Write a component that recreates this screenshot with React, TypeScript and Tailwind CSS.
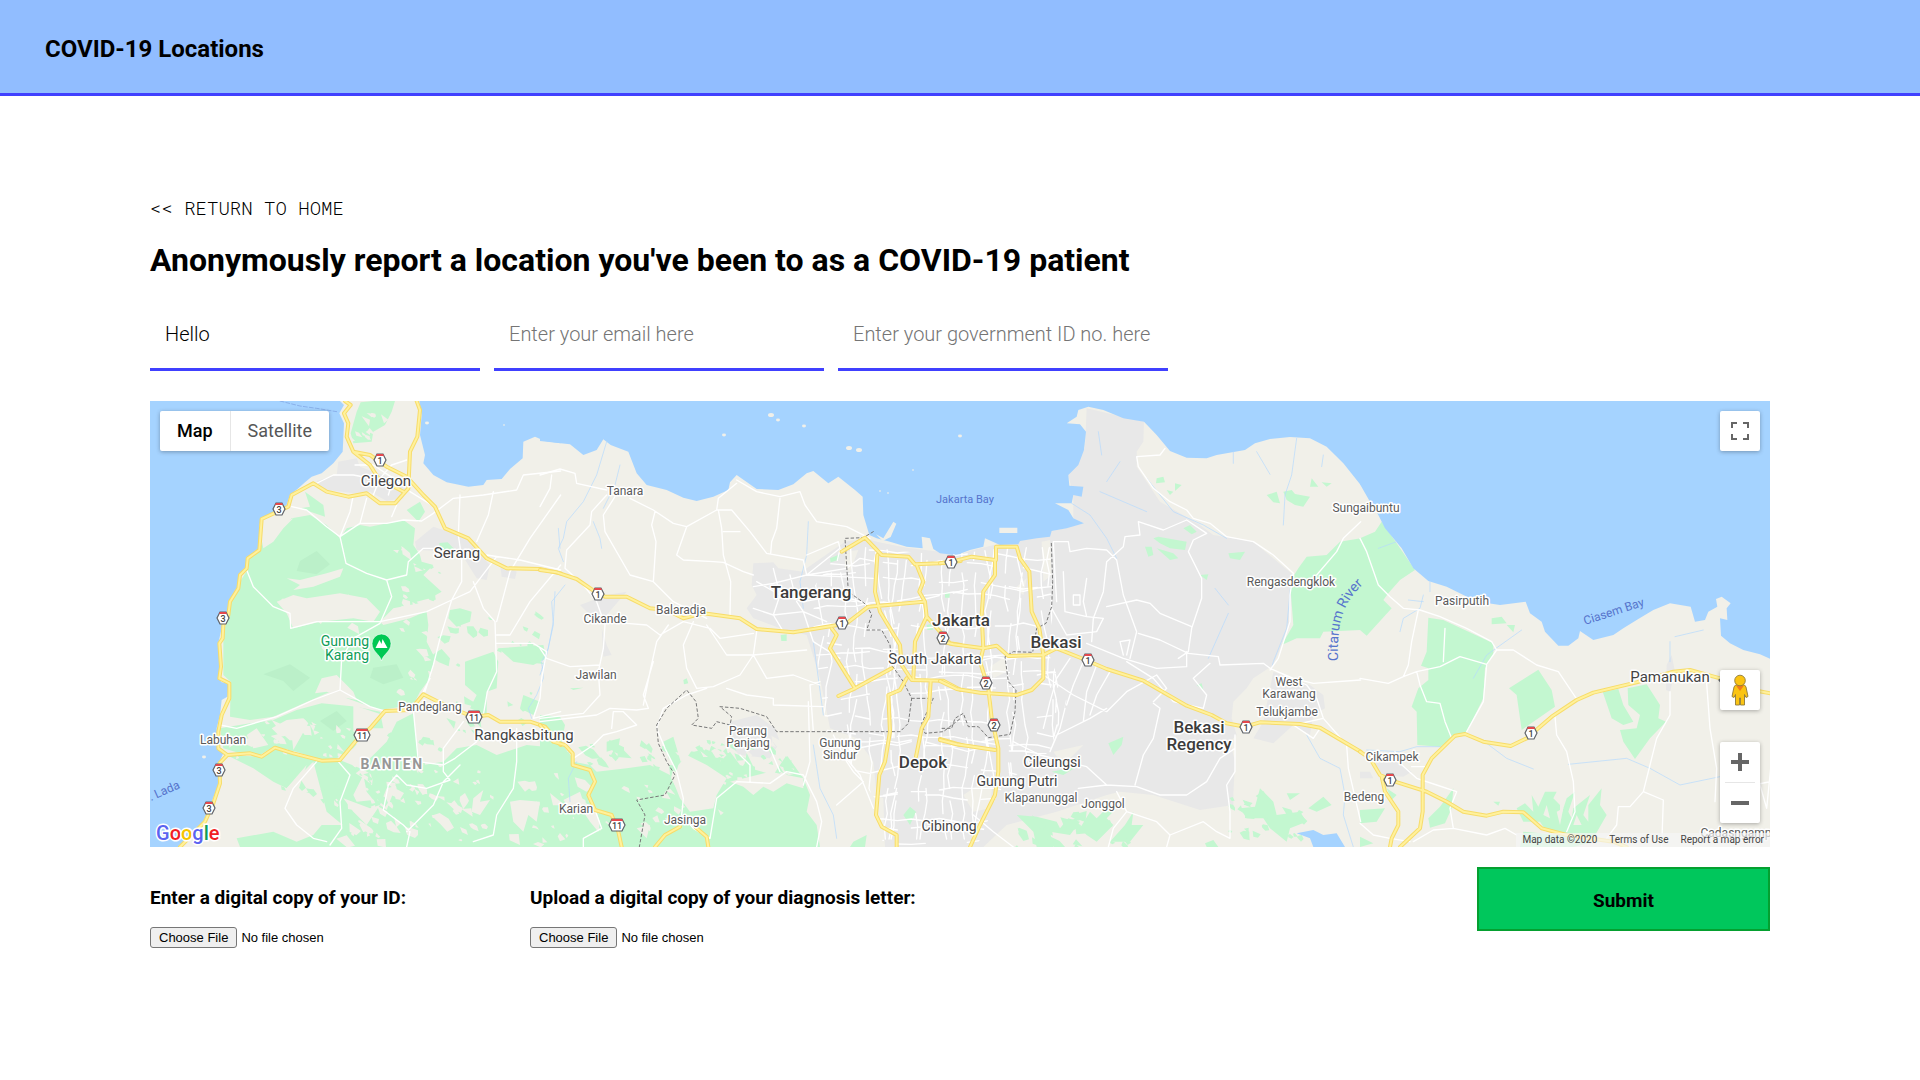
import { useState } from 'react'
import { clsx } from 'clsx'

type Tile = {
  x: number
  water: string[]
  urban: string[]
  parks: string[]
  clearings: string[]
  rivers: string[]
  streets: string[]
  highways: string[]
  borders: string[]
}

type Label = {
  text: string
  x: number
  y: number
  kind: 'city' | 'town' | 'suburb' | 'village'
}

// terrain is drawn at three units per pixel, in four tiles side by side
const tiles: Tile[] = [
  {
    x: -30,
    water: [
      'M30 18L600 18L612 30L598 55L612 85L610 130L608 170L580 205L545 235L515 245L495 262L475 280L450 300L440 330L420 350L362 372L357 400L358 460L345 470L320 490L318 520L297 540L295 575L275 605L262 660L245 700L236 740L240 800L235 850L245 862L265 865L262 905L245 915L240 960L230 1000L232 1060L250 1075L238 1100L235 1170L215 1220L190 1280L120 1356L30 1356Z',
      'M838 18L1262 18L1262 145L1215 138L1185 125L1150 140L1148 190L1110 222L1085 252L1040 255L1030 270L985 275L920 262L880 240L850 205L855 180L840 120L845 60Z',
    ],
    urban: [
      'M595 200L650 190L660 215L700 230L800 262L790 310L740 318L690 290L640 295L540 282L530 258L590 240Z',
      'M825 440L880 395L910 405L1000 440L1030 490L1050 510L1040 555L1010 550L960 470L830 465Z',
      'M1080 505L1130 530L1125 552L1085 545Z',
    ],
    parks: [
      'M650 50L662 22L700 18L765 18L755 50L735 90L700 110L695 140L640 145L632 115Z',
      'M918 42L955 40L978 60L970 85L945 95L922 75Z',
      'M455 370L510 360L560 390L600 430L620 400L660 390L690 395L790 375L825 400L820 450L840 480L845 500L880 510L850 540L905 590L870 610L830 620L860 650L865 690L860 740L885 790L870 850L840 890L820 930L720 945L620 910L590 885L560 895L480 930L400 965L330 975L270 965L272 860L250 840L250 720L265 650L280 600L300 560L325 520L325 490L365 450L370 420L420 400Z',
      'M800 345L840 320L855 350L835 380Z',
      'M495 290L550 330L555 365L480 340L510 335Z',
      'M240 1000L330 985L400 975L470 945L545 925L650 935L720 950L730 1000L690 1000L640 1060L590 1090L540 1095L470 1070L400 1055L360 1080L300 1075L250 1060Z',
      'M260 1080L360 1085L405 1060L460 1080L545 1100L600 1095L660 1120L740 1040L770 980L820 955L835 1080L850 1110L820 1160L740 1180L700 1280L620 1300L560 1250L520 1100L440 1180L400 1160L340 1120Z',
      'M930 645L960 640L995 650L990 680L950 695L925 670Z',
      'M975 800L1060 770L1075 800L1070 880L1040 890L1040 960L990 940L1010 900L975 870Z',
      'M1075 760L1210 750L1220 790L1180 810L1120 800Z',
      'M1150 900L1200 920L1180 960L1140 940Z',
      'M780 1140L850 1110L910 1100L950 1060L1010 1050L1070 1080L1160 1050L1262 1060L1262 1356L300 1356L290 1330L400 1310L470 1340L520 1320L545 1290L610 1290L680 1200L740 1245Z',
    ],
    clearings: [
      'M410 620L460 600L500 610L600 595L680 610L720 650L700 680L640 670L540 680L460 700L440 655Z',
      'M440 550L480 555L560 535L610 520L600 545L520 575L460 585L480 570Z',
      'M360 410L460 370L430 400L400 440L370 460Z',
      'M545 850L590 840L640 890L650 915L600 905L560 890L525 895Z',
      'M720 680L760 640L860 620L880 640L810 670L730 690Z',
      'M395 1000L440 975L490 970L505 985L480 1030L460 1065L455 1020L420 1025Z',
      'M320 1020L350 1000L385 1050L340 1060Z',
      'M640 930L700 950L730 960L690 1000L640 1010Z',
      'M640 1200L670 1140L680 1190L700 1215L650 1220Z',
      'M610 1210L690 1240L720 1230L680 1290L640 1250Z',
      'M440 1180L500 1110L470 1200L520 1220L560 1270L500 1270L520 1310L450 1260Z',
      'M1000 1210L1030 1185L1020 1220L1050 1215L1020 1260L995 1250Z',
      'M1110 1220L1140 1215L1200 1220L1190 1280L1165 1260L1150 1310L1120 1280Z',
    ],
    rivers: ['M1245 590L1240 680L1225 760L1205 800L1210 850L1190 900L1165 940L1175 970', 'M1255 400L1260 460'],
    streets: [
      'M520 270L580 240L640 240L720 255L800 265', 'M640 300L630 350L600 425L560 395L500 345L455 335',
      'M600 425L618 505L680 535L740 555L755 605L720 685L640 730L605 790L600 885L520 915L410 965L290 1000L240 990',
      'M600 425L660 385L740 385L790 375L845 378L880 355L940 310L1030 300L1130 285L1150 240L1262 228',
      'M320 525L340 575L400 635L450 655L452 700L530 680L720 680L860 650L935 615L990 590L1070 485',
      'M870 850L850 890', 'M740 555L800 540L805 500L850 460L910 460', 'M935 615L900 730L880 810L855 890', 'M1000 560L1030 640L1065 680L1070 830L1042 890L1030 960',
      'M960 300L955 420L965 490L965 560L935 615', 'M1060 290L1045 360L1010 440', 'M1262 300L1170 430L1110 530L1070 680', 'M600 885L690 935L740 950L820 945L835 1100L910 1110L945 1090L1010 1040',
      'M970 980L910 1060L910 1130L930 1155L860 1180L800 1170L770 1140L745 1170L730 1245L790 1290L810 1310L800 1356', 'M800 1310L880 1230L910 1160L960 1110',
      'M530 1100L460 1180L435 1240L470 1290L520 1330L560 1340', 'M595 1100L630 1140L600 1220L605 1300L570 1350', 'M1130 1000L1130 1100L1120 1180L1070 1260L1060 1320L1000 1340', 'M1262 510L1170 620L1110 720L1070 720',
      'M1070 745L1180 745L1220 770L1205 850L1200 910L1180 970L1262 950', 'M645 210L700 210L760 250L745 300', 'M800 195L755 210L720 250L700 300', 'M680 310L660 385', 'M770 330L755 365', 'M810 290L875 330', 'M1040 480L1140 495L1262 525',
    ],
    highways: [
      'M615 18L632 30L612 55L625 85L620 125L640 170L690 180L740 215L800 245L850 300L885 335L915 400L985 430L1040 490L1100 520L1200 522L1262 535',
      'M830 18L840 45L832 125L810 170L805 280L765 325L720 325L680 295L625 305L560 290L520 265L455 300L445 335L365 372L358 465L323 490L320 520L300 540L295 580L270 620L265 660L250 690L248 730L238 745L243 815L238 850L268 865L268 910L245 960L235 1010L235 1060L262 1080L238 1105L240 1165L220 1225L195 1280L120 1356',
      'M640 170L690 210L715 250L790 290', 'M262 1080L330 1075L365 1085L405 1058L460 1075L545 1097L600 1095L650 1035L690 1000L735 948L810 945L850 898L890 918L950 945L1000 966L1045 960L1080 980L1170 980L1215 995L1262 1050',
    ],
    borders: [],
  },
  {
    x: 1170,
    water: [
      'M0 18L1262 18L1262 482L1200 475L1180 462L1170 430L1145 425L1148 460L1100 455L1050 440L1010 430L988 420L970 360L968 305L945 285L895 245L865 265L820 228L800 235L760 268L715 285L650 282L590 240L570 262L565 285L520 305L470 318L430 308L380 285L320 270L290 235L265 170L212 150L190 133L170 165L130 180L90 148L0 138Z',
    ],
    urban: [
      'M640 505L700 502L715 520L790 530L800 520L915 440L975 430L1010 440L1100 458L1262 478L1262 1356L1035 1356L1030 1210L1010 1200L1000 1100L950 1030L870 1000L840 850L800 720L720 700L640 670L620 640L650 600L635 570Z',
      'M570 980L650 960L705 1000L720 1040L690 1090L600 1080L565 1050Z', 'M120 630L200 600L260 590L200 660L180 690Z', 'M185 700L200 750L215 780L190 785Z',
    ],
    parks: [
      'M0 960L60 965L75 990L65 1040L100 1100L150 1110L170 1130L260 1120L330 1110L390 1140L385 1080L370 1040L400 1025L425 1110L460 1060L500 1040L545 1060L540 1100L570 1070L600 1110L630 1120L700 1140L740 1080L790 1150L810 1200L800 1250L830 1290L840 1356L0 1356Z',
      'M430 855L440 850L445 865L432 868Z', 'M722 720L740 718L740 738L724 738Z', 'M870 490L900 478L895 495L872 502Z', 'M1160 690L1180 685L1178 705L1162 705Z', 'M1215 592L1227 592L1227 608L1215 608Z',
      'M1090 1260L1110 1235L1128 1250L1110 1290Z', 'M940 1340L980 1320L975 1356L930 1356Z', 'M90 880L130 878L100 885Z', 'M200 1040L240 1030L235 1060L200 1070Z',
    ],
    clearings: [
      'M70 1215L120 1190L130 1220L165 1240L180 1280L175 1310L150 1280L130 1250L90 1240Z',
      'M415 1110L440 1080L500 1110L560 1150L530 1200L520 1240L450 1250L420 1210L400 1160Z',
      'M570 1160L690 1130L790 1150L790 1180L740 1165L700 1190L670 1175L640 1200L610 1175Z',
      'M290 1300L330 1290L320 1330Z', 'M915 470L955 465L930 530L915 520Z',
    ],
    rivers: ['M200 140L170 240L130 320L80 380L70 430L55 460L70 500', 'M240 210L225 270L190 340', 'M160 380L180 430L185 460', 'M75 570L35 620L40 690L20 780L0 840', 'M805 380L800 480L780 560L790 640', 'M820 740L850 960', 'M820 1050L840 1180L880 1260L890 1330', 'M110 1100L85 1150L90 1220'],
    streets: [
      'M0 240L60 222L105 235L110 265L200 285', 'M35 240L30 280L0 335', 'M200 300L155 350L150 390L80 465L75 520L130 570L170 620L195 690L190 760L175 830L180 900L130 955L0 970',
      'M225 305L190 360L195 410L270 540L340 560L400 620L500 670', 'M270 310L340 345L400 385L440 395L530 345L535 310L590 265', 'M345 350L335 390L348 440L340 560',
      'M440 395L410 480L430 495L520 500L550 502L610 530L640 540', 'M535 345L545 400L550 480L572 560L570 660', 'M530 345L575 345L630 410L680 475L790 495L800 540', 'M590 255L650 290L720 305L780 290L795 330L830 380L920 395L990 430',
      'M720 310L710 400L695 440L692 475', 'M550 410L600 410', 'M800 480L895 440L900 460L800 540', 'M260 685L320 690L360 720L430 680L510 700L540 730L640 715', 'M385 690L350 740L330 830L310 930',
      'M460 680L430 750L440 820L470 880L520 875L600 840L640 780L650 710', 'M500 690L560 780L640 780L800 765', 'M560 880L620 900L700 910L700 930L850 935', 'M640 780L680 850L760 840L840 870',
      'M0 760L20 790L90 815L180 810', 'M0 980L170 960L210 940L290 945L325 940L310 900L340 800', 'M100 1090L160 1050L190 1020L230 1010L290 990L250 950L220 950L215 1000', 'M440 900L370 940L350 1000L375 1060L410 1130L430 1210L425 1260L460 1300L510 1330L530 1210L590 1160L690 1165L740 1130L790 1140L830 1220L845 1280L830 1356',
      'M600 1080L630 1110L630 1160', 'M690 1060L720 1130', 'M805 920L810 1100L790 1170', 'M840 860L810 870L820 1010', 'M910 1080L960 1140L1000 1240', 'M880 1020L920 1100L940 1130L970 1160L890 1230', 'M440 900L500 880', 'M165 1245L185 1300L130 1330L130 1356',
      'M650 560L720 600L790 620L900 600L990 630', 'M700 520L720 600L700 660L730 710', 'M640 640L700 660L790 650L860 680', 'M750 540L770 620L790 650L820 740L900 790', 'M640 575L700 565L800 540L900 545L1000 550', 'M1010 500L960 490L920 520L800 540',
    ],
    highways: [
      'M0 525L50 532L110 552L165 590L195 605L260 605L330 640L380 645L430 670L490 655L600 670L650 702L760 712L880 692L920 685L985 635L1150 620',
      'M905 470L975 428L1025 480L1105 485L1125 508L1200 505L1262 498', 'M1012 480L1005 590L1020 650L1080 750L1085 810L1115 855L1210 857L1262 885',
      'M1130 510L1150 560L1138 590L1155 620L1160 665L1200 710L1230 745L1262 750', 'M1160 665L1125 740L1120 850', 'M875 700L890 720L870 760L945 880L895 903', 'M945 880L1055 820', 'M1100 850L1080 885L1045 900L1050 1010L1035 1100L1018 1140L1008 1260L1025 1295L1070 1320L1070 1356',
      'M1172 860L1165 965L1145 1000L1128 1085', 'M1200 1032L1262 1050', 'M0 990L40 1040L75 1050L98 1075L98 1110L150 1125L165 1160L145 1200L165 1245L215 1260L235 1310L245 1356', 'M345 1356L375 1320L420 1295', 'M465 1295L500 1325L505 1356',
    ],
    borders: [
      'M1000 410L970 428L915 430L918 480L925 590L980 630L995 660L980 705L1025 705L1050 750L1055 810L1090 860L1115 910L1105 985L1080 1010L710 1010L680 965L600 940L540 935L575 965L570 990L530 980L515 1000L455 990L475 970L468 920L440 885L380 940L350 990L355 1045L380 1100L405 1140L375 1200L290 1215L315 1260L298 1356',
      'M1115 910L1180 910L1145 985L1155 1015L1210 1010L1262 970',
    ],
  },
  {
    x: 2370,
    water: [
      'M0 18L1262 18L1262 270L1210 205L1160 155L1110 130L1050 126L990 132L945 145L915 165L830 180L800 190L740 188L690 168L650 120L612 80L550 70L490 45L445 35L415 45L410 65L380 85L420 88L438 110L432 165L415 210L385 240L388 272L430 275L425 305L400 300L395 325L345 325L385 345L400 370L432 385L380 400L335 408L330 425L290 430L240 438L235 448L180 450L135 430L130 455L90 465L50 480L0 470Z',
      'M1070 1315L1120 1305L1150 1320L1190 1315L1215 1356L1120 1356L1110 1330Z',
    ],
    urban: [
      'M0 475L50 482L90 467L340 408L432 385L400 370L400 300L385 240L435 160L440 40L612 80L610 140L590 170L590 215L660 320L780 390L820 420L940 440L1060 540L1050 690L1000 810L940 850L920 880L880 920L875 970L890 1020L870 1040L885 1100L880 1200L880 1230L780 1245L640 1200L540 1190L500 1200L350 1250L200 1290L130 1356L0 1356Z',
      'M1000 830L1110 870L1150 900L1155 940L1120 960L1110 1020L1060 990L1000 1045L940 1030L970 980Z',
    ],
    parks: [
      'M1100 485L1160 480L1200 440L1262 430L1262 705L1150 710L1140 730L1070 730L1025 750L1060 690L1050 560L1075 520Z',
      'M650 250L670 245L675 262L648 265Z', 'M705 265L725 270L705 288Z', 'M680 285L700 290L690 300Z', 'M980 300L1010 290L1020 325L1000 322Z', 'M1030 290L1055 285L1065 297L1110 305L1090 335L1065 330L1040 315Z', 'M1115 250L1135 275L1110 275Z', 'M1145 262L1175 265L1160 275Z',
      'M730 400L750 390L770 410L755 418Z', 'M615 455L635 455L640 480L625 485Z', 'M640 430L655 425L740 440L735 465L690 460L660 445Z', 'M650 460L700 475L715 490L690 495Z', 'M865 475L915 470L900 495L870 490Z', 'M780 540L805 538L800 555Z',
      'M170 820L190 795L190 820Z', 'M505 1045L550 1025L545 1050L520 1080Z', 'M15 592L30 592L28 608L15 608Z', 'M335 1130L410 1115L370 1140Z', 'M110 1210L145 1190L145 1215L120 1228Z', 'M770 870L785 865L790 885Z',
      'M230 1260L290 1265L350 1280L360 1300L385 1270L420 1280L390 1320L330 1310L340 1356L290 1356L280 1310Z', 'M420 1300L450 1250L470 1270L500 1240L530 1240L500 1270L520 1290L470 1340L440 1320Z', 'M510 1340L555 1290L580 1250L575 1290L610 1290L570 1340Z',
      'M900 1240L945 1235L960 1180L1000 1220L1010 1260L1080 1250L1100 1280L1050 1300L1040 1340L990 1300L970 1270L920 1270Z', 'M1040 1195L1080 1195L1050 1215Z', 'M1105 1240L1150 1205L1175 1230L1130 1250Z', 'M795 1345L820 1335L835 1356L800 1356Z',
    ],
    clearings: ['M178 398L232 398L232 414L178 414Z', 'M305 440L330 435L335 540L310 560Z', 'M225 580L260 550L250 600Z', 'M150 815L195 785L200 830L160 850Z', 'M340 1070L430 1050L370 1110Z', 'M70 1200L160 1140L150 1240L100 1250Z'],
    rivers: ['M395 325L450 360L500 430L530 490', 'M475 110L485 180', 'M1070 130L1055 240L1035 300L1030 390', 'M950 170L990 238', 'M880 170L880 205', 'M620 250L700 350L790 390L860 430', 'M1055 540L1040 700L1000 800L995 820', 'M1100 1020L1140 1090L1200 1120L1215 1200L1210 1260L1240 1356', 'M865 655L805 790', 'M825 580L865 630', 'M480 290L620 350', 'M540 200L500 260', 'M1150 180L1145 215'],
    streets: [
      'M675 160L660 180L590 185L595 215L640 280L690 320L740 345L760 370L810 385L860 425L940 440L1000 480L1060 535L1050 600L1050 680L1015 790L990 825', 'M595 380L600 420L555 425L550 455L500 500L490 590L460 670L455 740', 'M595 380L670 405L740 375L800 415L760 435L745 470L785 550L785 610L755 700L745 770L715 790',
      'M500 465L440 460L390 470L385 440L340 440', 'M500 465L530 495L550 600L590 710L570 790', 'M500 635L590 615L630 625L660 655L755 695', 'M595 715L660 735L745 775L835 785L840 810L970 805L990 820L1100 870L1130 910L1150 970L1220 1050L1225 1120L1262 1280',
      'M990 820L1060 850L1120 865L1262 855', 'M370 530L375 650L440 665L490 670', 'M335 640L380 720L470 710L490 670', 'M440 745L550 790L650 820L740 815L740 770', 'M560 800L640 850L700 920L790 940L800 900L760 850L810 805', 'M640 920L680 880L650 840', 'M640 925L660 940L640 1030L610 1080L585 1170', 'M310 840L400 900L500 950L560 890L650 840',
      'M440 1115L500 1170L590 1175L660 1200L740 1200L800 1160L840 1090L885 1060L885 1020', 'M885 1060L885 1130L860 1170L870 1250L870 1330L830 1310L790 1280L690 1320L650 1280L560 1250L530 1190', 'M415 1180L500 1170', 'M560 1250L520 1300L505 1356',
      'M220 1040L300 1080L440 1115', 'M330 1070L350 1020L450 970L500 940', 'M375 940L360 1000L330 1070', 'M100 1260L160 1310L220 1356', 'M1130 540L1190 470L1210 430L1262 380', 'M1150 970L1060 990L1120 1030L1140 1000',
      'M400 600L420 600L420 630L400 630Z', 'M690 1320L680 1356', 'M550 780L540 740L570 735L560 780', 'M430 800L400 870L380 930', 'M470 810L440 890L430 980', 'M510 830L470 900L450 960', 'M390 790L350 850L330 920L310 1000', 'M340 440L345 540L350 620', 'M440 550L430 620L440 665',
    ],
    highways: [
      'M0 505L35 500L95 485L165 495L165 540L130 590L125 660L130 760L120 800L145 880L155 970L175 1060L175 1130L165 1200L120 1290L90 1356', 'M168 495L168 455L230 455L240 490L268 530L275 650L298 700L310 780L310 850L275 885L230 900L180 897L120 893L50 882L0 858',
      'M0 738L40 748L130 760L170 752L205 783L310 780L350 760L430 792L500 822L610 857L740 932L815 960L860 985L915 995L960 982L1080 987L1140 998L1262 1070', 'M0 1035L50 1048L165 1065',
    ],
    borders: ['M334 445L338 560L335 635L318 685L290 700L278 772L220 770L195 785L205 860L228 885L225 950L210 1018L145 1028L115 995L85 995L70 955L45 970L35 1000L0 1000'],
  },
  {
    x: 3630,
    water: ['M0 18L1232 18L1232 792L1200 778L1150 765L1110 745L1083 722L1080 670L1102 675L1100 640L1112 625L1085 605L1068 612L1072 635L1045 650L1035 675L1005 680L992 635L930 625L880 645L830 675L790 700L760 720L700 735L660 708L655 730L625 752L595 752L555 710L545 680L510 655L497 620L420 630L385 625L330 610L260 575L205 558L160 520L125 460L75 400L55 360L30 320L0 268Z'],
    urban: ['M45 1105L110 1100L155 1130L130 1145L60 1140Z', 'M920 810L935 780L945 830L930 890L918 885Z', 'M0 1130L30 1130L40 1150L0 1150Z'],
    parks: [
      'M0 430L45 410L65 380L110 445L165 525L120 555L85 595L70 615L95 640L20 722L0 705Z',
      'M205 668L250 675L400 745L400 780L375 820L370 910L320 1010L240 1055L172 1050L170 950L155 935L175 880L205 855L205 820L183 812L200 770Z',
      'M535 824L575 885L585 935L485 1005L470 900L447 880Z', 'M728 890L775 882L790 930L820 980L790 990L755 970Z', 'M803 880L860 868L900 930L895 970L918 980L870 1030L825 1092L790 1040L780 1005L830 1000L840 960L805 930Z',
      'M0 1245L75 1240L50 1280L0 1285Z', 'M205 1270L240 1235L280 1180L275 1240L255 1285L210 1298Z', 'M80 1180L110 1200L95 1215Z', 'M400 1220L420 1220L415 1232Z', 'M395 670L425 665L440 685L395 688Z', 'M440 690L465 690L460 712Z', 'M0 1325L40 1345L0 1356Z',
      'M470 1240L495 1225L520 1250L515 1200L535 1235L555 1190L590 1190L580 1210L600 1230L600 1270L620 1210L645 1190L625 1250L635 1270L640 1240L690 1200L670 1260L685 1280L685 1230L725 1180L720 1230L740 1260L700 1330L630 1320L560 1310L540 1280L490 1280Z', 'M490 1310L600 1320L700 1340L640 1356L480 1356Z',
    ],
    clearings: ['M590 1250L610 1240L600 1290Z', 'M650 1260L665 1290L640 1290Z', 'M560 1230L570 1270L550 1260Z'],
    rivers: ['M55 460L110 440', 'M210 560L210 590', 'M145 615L190 620', 'M190 600L180 640L130 670L120 710', 'M340 850L380 780L485 705', 'M625 1108L800 1090L870 1120L960 1170L1080 1145', 'M930 740L930 800', 'M945 725L1030 705', 'M380 1045L440 1090L520 1122', 'M20 1065L120 1070L170 1055L250 1055'],
    streets: [
      'M0 430L20 470L55 570L90 605L130 640L180 645L240 665L320 700L395 740L410 765L460 765L530 810L595 830L650 912', 'M175 645L155 740L145 810L130 845L85 865L0 850', 'M130 845L170 830L240 815L300 785L380 808L410 765',
      'M380 808L370 920L320 1010', 'M170 830L180 870L200 920L240 925L255 980L275 1030', 'M255 700L250 800', 'M585 965L590 1020L620 1070L640 1160L645 1250L620 1310', 'M930 890L930 960L890 1030L870 1110L850 1190L910 1215L905 1356', 'M850 1190L810 1235L775 1235L770 1290L740 1330',
      'M1040 865L1050 1000L1070 1120L1065 1220', 'M120 1105L170 1150L230 1170L290 1190L270 1240L280 1300L380 1320L435 1300L470 1320', 'M155 1115L200 1115', 'M120 1105L105 1070', 'M280 1300L220 1305L160 1340', 'M0 1285L40 1320L90 1330L150 1340', 'M1200 1170L1220 1240L1232 1120', 'M1180 1170L1232 1160',
    ],
    highways: [
      'M0 1070L30 1090L60 1140L105 1160L200 1190L260 1220L310 1250L380 1262L430 1250L490 1252L545 1300L620 1320L760 1340L800 1356', 'M65 1145L75 1190L115 1250L115 1290L95 1330L90 1356', 'M120 1356L180 1300L188 1250L188 1140L215 1090L285 1022L315 1017L370 1040L452 1053L500 1030L575 965L650 915L700 893L830 862L940 830L990 825L1080 850L1150 880L1232 895',
    ],
    borders: [],
  },
]

const labels: Label[] = [
  { text: 'Tangerang', x: 661, y: 197, kind: 'city' },
  { text: 'Jakarta', x: 811, y: 225, kind: 'city' },
  { text: 'Bekasi', x: 906, y: 247, kind: 'city' },
  { text: 'Depok', x: 773, y: 367, kind: 'city' },
  { text: 'Bekasi', x: 1049, y: 332, kind: 'city' },
  { text: 'Regency', x: 1049, y: 349, kind: 'city' },
  { text: 'Cilegon', x: 236, y: 85, kind: 'town' },
  { text: 'Serang', x: 307, y: 157, kind: 'town' },
  { text: 'Rangkasbitung', x: 374, y: 339, kind: 'town' },
  { text: 'South Jakarta', x: 785, y: 263, kind: 'town' },
  { text: 'Cibinong', x: 799, y: 430, kind: 'suburb' },
  { text: 'Cileungsi', x: 902, y: 366, kind: 'suburb' },
  { text: 'Gunung Putri', x: 867, y: 385, kind: 'suburb' },
  { text: 'Pamanukan', x: 1520, y: 281, kind: 'town' },
  { text: 'Pandeglang', x: 280, y: 310, kind: 'village' },
  { text: 'Labuhan', x: 73, y: 343, kind: 'village' },
  { text: 'Tanara', x: 475, y: 94, kind: 'village' },
  { text: 'Cikande', x: 455, y: 222, kind: 'village' },
  { text: 'Balaradja', x: 531, y: 213, kind: 'village' },
  { text: 'Jawilan', x: 446, y: 278, kind: 'village' },
  { text: 'Parung', x: 598, y: 334, kind: 'village' },
  { text: 'Panjang', x: 598, y: 346, kind: 'village' },
  { text: 'Gunung', x: 690, y: 346, kind: 'village' },
  { text: 'Sindur', x: 690, y: 358, kind: 'village' },
  { text: 'Karian', x: 426, y: 412, kind: 'village' },
  { text: 'Jasinga', x: 535, y: 423, kind: 'village' },
  { text: 'Klapanunggal', x: 891, y: 401, kind: 'village' },
  { text: 'Jonggol', x: 953, y: 407, kind: 'village' },
  { text: 'Rengasdengklok', x: 1141, y: 185, kind: 'village' },
  { text: 'West', x: 1139, y: 285, kind: 'village' },
  { text: 'Karawang', x: 1139, y: 297, kind: 'village' },
  { text: 'Telukjambe', x: 1137, y: 315, kind: 'village' },
  { text: 'Sungaibuntu', x: 1216, y: 111, kind: 'village' },
  { text: 'Pasirputih', x: 1312, y: 204, kind: 'village' },
  { text: 'Cikampek', x: 1242, y: 360, kind: 'village' },
  { text: 'Bedeng', x: 1214, y: 400, kind: 'village' },
  { text: 'Cadasngamp', x: 1586, y: 436, kind: 'village' },
]

const shields: [number, number, string][] = [
  [230, 59, '1'], [129, 108, '3'], [73, 217, '3'], [212, 334, '11'], [324, 316, '11'],
  [69, 369, '3'], [59, 407, '3'], [448, 193, '1'], [801, 161, '1'], [692, 222, '1'],
  [793, 237, '2'], [467, 424, '11'], [938, 259, '1'], [836, 282, '2'], [844, 324, '2'],
  [1096, 326, '1'], [1381, 332, '1'], [1240, 379, '1'],
]

// small islands off the coast
const islands: [number, number, number][] = [
  [277, 22, 2], [354, 24, 1], [54, 356, 2], [574, 34, 2], [621, 14, 3], [628, 19, 2], [654, 25, 2], [699, 47, 3],
  [709, 49, 3], [763, 69, 1], [730, 90, 1], [738, 92, 1], [810, 35, 2],
]

function random(seed: number) {
  let s = seed
  return () => {
    s = (s * 16807) % 2147483647
    return s / 2147483647
  }
}

// city blocks: a loose grid that bends and breaks
function cityStreets() {
  const next = random(19)
  const paths: string[] = []
  for (let x = 2010; x < 2840; x += 33) {
    let d = ''
    let px = x
    for (let y = 440; y < 1350; y += 38) {
      px += (next() - 0.5) * 20
      d += `${d === '' || next() < 0.2 ? 'M' : 'L'}${Math.round(px)} ${y}`
    }
    paths.push(d)
  }
  for (let y = 450; y < 1350; y += 44) {
    let d = ''
    let py = y
    for (let x = 1990; x < 2860; x += 42) {
      py += (next() - 0.5) * 22
      d += `${d === '' || next() < 0.3 ? 'M' : 'L'}${x} ${Math.round(py)}`
    }
    paths.push(d)
  }
  return paths.join('')
}

// ragged slivers along the edge of the forests
function patches(seed: number, count: number, x: number, y: number, w: number, h: number) {
  const next = random(seed)
  let d = ''
  for (let i = 0; i < count; i++) {
    const cx = x + next() * w
    const cy = y + next() * h
    const size = 6 + next() * next() * 26
    const turn = next() * 6.3
    const corners = 3 + Math.floor(next() * 4)
    for (let k = 0; k < corners; k++) {
      const a = turn + (k / corners) * 6.3
      const r = size * (0.35 + next() * 0.9)
      const px = Math.round(cx + Math.cos(a) * r + Math.sin(a) * r * 0.5)
      const py = Math.round(cy + Math.sin(a) * r)
      d += `${k === 0 ? 'M' : 'L'}${px} ${py}`
    }
    d += 'Z'
  }
  return d
}

const cityPath = cityStreets()
const bare = [
  patches(5, 40, 240, 960, 420, 110),
  patches(11, 50, 560, 1090, 320, 240),
  patches(13, 34, 880, 1100, 420, 230),
  patches(17, 26, 1300, 1100, 420, 220),
  patches(19, 40, 1560, 1020, 460, 130),
  patches(23, 26, 740, 440, 110, 480),
  patches(31, 9, 400, 580, 260, 200),
  patches(37, 14, 600, 20, 120, 110),
].join('')
const wooded = [
  patches(41, 30, 870, 640, 300, 330),
  patches(43, 40, 400, 1090, 300, 110),
  patches(45, 44, 660, 960, 330, 200),
  patches(47, 46, 1500, 1020, 440, 120),
  patches(49, 14, 1240, 1030, 260, 80),
  patches(53, 24, 2600, 1240, 340, 100),
  patches(59, 22, 3240, 1190, 240, 130),
  patches(61, 14, 760, 430, 140, 160),
].join('')

function Shield({ x, y, text }: { x: number; y: number; text: string }) {
  const w = text.length > 1 ? 8 : 6
  return (
    <g transform={`translate(${x} ${y})`}>
      <path
        d={`M${-w + 3} -6H${w - 3}L${w} 0L${w - 3} 6H${-w + 3}L${-w} 0Z`}
        fill="#fff"
        stroke="#5f6368"
        strokeWidth="1.2"
      />
      <path d={`M${-w + 3} -6H${w - 3}L${w - 2} -4H${-w + 2}Z`} fill="#e5484d" />
      <text y="4" textAnchor="middle" className="fill-[#444444] text-[9px] font-medium">
        {text}
      </text>
    </g>
  )
}

function Terrain() {
  return (
    <svg
      viewBox="0 0 1620 446"
      preserveAspectRatio="xMidYMid slice"
      className="w-full h-full"
      role="img"
      aria-label="Map of Jakarta and Banten">
      <defs>
        <clipPath id="city">
          <path d="M1990 560L2085 425L2170 440L2300 455L2420 460L2700 420L2710 640L2690 740L2750 900L2700 1050L2560 1150L2480 1338L2200 1338L2180 1200L2030 990L1990 700Z" />
        </clipPath>
        <path id="citarum" d="M1188 260C1187 225 1190 200 1222 176" />
      </defs>
      <rect width="1620" height="446" fill="#f1f0e9" />

      <g transform="scale(0.333333)" strokeLinejoin="round" strokeLinecap="round" fill="none">
        {tiles.map(tile => (
          <g key={tile.x} transform={`translate(${tile.x} -18)`}>
            <path d={tile.urban.join('')} fill="#e8e8e8" />
            <path d={tile.parks.join('')} fill="#c3f7d0" />
          </g>
        ))}
        {/* hills around Gunung Karang */}
        <path
          d="M450 480L500 450L540 490L500 520L440 510ZM670 800L740 790L760 830L700 850L660 830ZM340 820L420 790L480 830L430 870L400 840ZM510 960L560 930L590 960L550 990Z"
          fill="#bbf0c9"
        />
        <path d={bare} fill="#f1f0e9" />
        <path d={wooded} fill="#c3f7d0" />
        {tiles.map(tile => (
          <g key={tile.x} transform={`translate(${tile.x} -18)`}>
            <path d={tile.water.join('')} fill="#a5d3ff" />
            <path d={tile.clearings.join('')} fill="#f1f0e9" />
            <path d={tile.rivers.join('')} stroke="#b4daff" strokeWidth="2" />
          </g>
        ))}
        <path d="M2178 400L2200 412L2230 362L2239 368L2222 408L2198 420Z" fill="#f1f0e9" />
        <path d={cityPath} stroke="#fff" strokeWidth="4" clipPath="url(#city)" />
        {tiles.map(tile => (
          <g key={tile.x} transform={`translate(${tile.x} -18)`}>
            <path d={tile.streets.join('')} stroke="#fff" strokeWidth="4" />
            <path d={tile.borders.join('')} stroke="#777" strokeWidth="3" strokeDasharray="8 8" />
          </g>
        ))}
        {tiles.map(tile => (
          <g key={tile.x} transform={`translate(${tile.x} -18)`}>
            <path d={tile.highways.join('')} stroke="#f7dc6a" strokeWidth="12" />
            <path d={tile.highways.join('')} stroke="#fff19c" strokeWidth="6" />
          </g>
        ))}
        <path d="M390 0L450 15L500 22L560 32" stroke="#7c9fe0" strokeWidth="2" strokeDasharray="12 6" />
      </g>

      {islands.map(([x, y, r]) => (
        <ellipse key={`${x}-${y}`} cx={x} cy={y} rx={r} ry={r * 0.7} fill="#f1f0e9" />
      ))}

      {shields.map(([x, y, text]) => (
        <Shield key={`${x}-${y}`} x={x} y={y} text={text} />
      ))}
      <path d="M1575 274L1569 279L1572 283H1580" fill="#fff" stroke="#5f6368" strokeWidth="1.2" />

      <g stroke="#fff" strokeWidth="3" strokeLinejoin="round" paintOrder="stroke">
        {labels.map(label => (
          <text
            key={`${label.text}-${label.x}-${label.y}`}
            x={label.x}
            y={label.y}
            textAnchor="middle"
            className={clsx(
              label.kind === 'city' && 'fill-[#3c3c3c] text-[17px] font-medium',
              label.kind === 'town' && 'fill-[#444444] text-[15px]',
              label.kind === 'suburb' && 'fill-[#444444] text-[14px]',
              label.kind === 'village' && 'fill-[#5a5a5a] text-[12px]'
            )}>
            {label.text}
          </text>
        ))}
        <text x="242" y="368" textAnchor="middle" className="fill-[#979797] text-[14px] font-bold tracking-widest">
          BANTEN
        </text>
        <text textAnchor="end" className="fill-[#0f9d58] text-[14px]">
          <tspan x="219" y="245">Gunung</tspan>
          <tspan x="219" y="259">Karang</tspan>
        </text>
      </g>

      <g className="fill-[#5674cc] text-[12px]">
        <text x="815" y="102" textAnchor="middle" className="text-[11px]">Jakarta Bay</text>
        <text transform="translate(1 400) rotate(-24)">. Lada</text>
        <text transform="translate(1435 224) rotate(-18)">Ciasem Bay</text>
        <text className="text-[14px]">
          <textPath href="#citarum">Citarum River</textPath>
        </text>
      </g>

      {/* mountain marker */}
      <path
        d="M231.500 260C230 253 222 251 222 242.500A9.500 9.500 0 0 1 241 242.500C241 251 233 253 231.500 260Z"
        fill="#00c853"
        stroke="#fff"
        strokeWidth="0.6"
      />
      <path d="M225.500 247L229.500 239L231.500 243L232.500 238L237.500 247Z" fill="#fff" />
    </svg>
  )
}

function Pegman() {
  return (
    <svg width="18" height="32" viewBox="0 0 18 32" aria-hidden="true">
      <path
        d="M4.500 11H13.500L15 13L17 22.500L15 23.500L13.500 20.500V31H9.500V24H8.500V31H4.500V20.500L3 23.500L1 22.500L3 13Z"
        fill="#fbc412"
        stroke="#8f7a3a"
        strokeWidth="0.9"
        strokeLinejoin="round"
      />
      <path d="M5 11.500H13L9 17Z" fill="#f07a1c" />
      <circle cx="9" cy="6.500" r="5.300" fill="#fbc412" stroke="#8f7a3a" strokeWidth="0.9" />
    </svg>
  )
}

function MapPanel() {
  return (
    <section className="relative bg-[#a5d3ff] w-full h-[446px] overflow-hidden">
      <Terrain />

      <div className="top-[10px] left-[10px] absolute flex bg-white shadow-[0_1px_4px_rgba(0,0,0,0.3)] rounded-xs h-10 text-[18px]">
        <button type="button" className="px-[17px] pb-[2px] font-medium text-black">
          Map
        </button>
        <button type="button" className="px-[17px] pb-[2px] border-[#e6e6e6] border-l text-[#565656]">
          Satellite
        </button>
      </div>

      <button
        type="button"
        aria-label="Toggle fullscreen view"
        className="top-[10px] right-[10px] absolute flex justify-center items-center bg-white shadow-[0_1px_4px_rgba(0,0,0,0.3)] rounded-xs w-10 h-10">
        <svg width="18" height="18" viewBox="0 0 18 18" fill="none" stroke="#666" strokeWidth="2" aria-hidden="true">
          <path d="M1 6V1H6M12 1H17V6M17 12V17H12M6 17H1V12" />
        </svg>
      </button>

      <div className="right-[10px] bottom-6 absolute flex flex-col gap-8">
        <button
          type="button"
          aria-label="Street View"
          className="flex justify-center items-center bg-white shadow-[0_1px_4px_rgba(0,0,0,0.3)] rounded-xs w-10 h-10">
          <Pegman />
        </button>
        <div className="flex flex-col items-center bg-white shadow-[0_1px_4px_rgba(0,0,0,0.3)] rounded-xs w-10">
          <button type="button" aria-label="Zoom in" className="flex justify-center items-center w-10 h-10">
            <svg width="18" height="18" viewBox="0 0 18 18" stroke="#666" strokeWidth="4" aria-hidden="true">
              <path d="M0 9H18M9 0V18" />
            </svg>
          </button>
          <div className="bg-[#e6e6e6] w-[30px] h-px" />
          <button type="button" aria-label="Zoom out" className="flex justify-center items-center w-10 h-10">
            <svg width="18" height="18" viewBox="0 0 18 18" stroke="#666" strokeWidth="4" aria-hidden="true">
              <path d="M0 9H18" />
            </svg>
          </button>
        </div>
      </div>

      <a
        href="#google"
        aria-label="Google"
        className="bottom-0 left-[6px] absolute font-medium text-[20px] leading-[28px] [-webkit-text-stroke:3px_white] [paint-order:stroke]">
        <span className="text-[#5b63f0]">G</span>
        <span className="text-[#f01d25]">o</span>
        <span className="text-[#f5c400]">o</span>
        <span className="text-[#5b63f0]">g</span>
        <span className="text-[#0f9d58]">l</span>
        <span className="text-[#f01d25]">e</span>
      </a>

      <div className="right-0 bottom-0 absolute flex bg-[#f5f5f5]/70 h-[14px] text-[#444444] text-[10px] leading-[14px]">
        <span className="px-[6px]">Map data ©2020</span>
        <a href="#terms" className="px-[6px]">Terms of Use</a>
        <a href="#report" className="px-[6px]">Report a map error</a>
      </div>
    </section>
  )
}

const fieldStyle =
  'bg-white px-[15px] border-[#4040ff] border-b-3 outline-none w-[330px] h-[71px] font-light text-[20px] text-black placeholder:text-[#757575]'

const fileStyle =
  "w-[300px] h-[21px] font-['Liberation_Sans',Arial,sans-serif] text-[13px] leading-[17px] file:mr-1 file:px-2 file:py-px file:border file:border-solid file:border-[#767676] file:rounded-[3px] file:bg-[#efefef] file:text-black"

export default function App() {
  const [name, setName] = useState('Hello')
  const [email, setEmail] = useState('')
  const [governmentId, setGovernmentId] = useState('')

  return (
    <div className="bg-white min-h-screen font-['Roboto',sans-serif] text-black">
      <header className="flex items-center bg-[#91bdff] px-[45px] pt-1 border-[#4040ff] border-b-3 h-24">
        <h1 className="font-bold text-[24px] leading-[28px]">COVID-19 Locations</h1>
      </header>

      <main className="px-[150px] pt-[96px] pb-24">
        <a
          href="#home"
          className="block font-['Roboto_Mono','Liberation_Mono',monospace] font-light text-[19px] leading-[32px]">
          &lt;&lt; RETURN TO HOME
        </a>
        <h2 className="mt-[16px] font-bold text-[32px] leading-[40px]">
          Anonymously report a location you've been to as a COVID-19 patient
        </h2>

        <form onSubmit={e => e.preventDefault()}>
          <div className="flex flex-row flex-wrap gap-[14px] mt-[20px] mb-[30px]">
            <input
              type="text"
              aria-label="Name"
              placeholder="Enter your name here"
              value={name}
              onChange={e => setName(e.target.value)}
              className={fieldStyle}
            />
            <input
              type="email"
              aria-label="Email"
              placeholder="Enter your email here"
              value={email}
              onChange={e => setEmail(e.target.value)}
              className={fieldStyle}
            />
            <input
              type="text"
              aria-label="Government ID number"
              placeholder="Enter your government ID no. here"
              value={governmentId}
              onChange={e => setGovernmentId(e.target.value)}
              className={fieldStyle}
            />
          </div>

          <MapPanel />

          <div className="flex flex-row items-start pt-5">
            <div className="flex flex-col gap-[18px] pt-[19px] w-[380px]">
              <label htmlFor="id-copy" className="font-bold text-[19px] leading-[23px]">
                Enter a digital copy of your ID:
              </label>
              <input id="id-copy" type="file" className={fileStyle} />
            </div>
            <div className="flex flex-col gap-[18px] pt-[19px]">
              <label htmlFor="letter-copy" className="font-bold text-[19px] leading-[23px]">
                Upload a digital copy of your diagnosis letter:
              </label>
              <input id="letter-copy" type="file" className={fileStyle} />
            </div>
            <button
              type="submit"
              className="bg-[#00c75c] ml-auto border-[#04a030] border-2 w-[293px] h-16 pt-1 font-bold text-[19px]">
              Submit
            </button>
          </div>
        </form>
      </main>
    </div>
  )
}
